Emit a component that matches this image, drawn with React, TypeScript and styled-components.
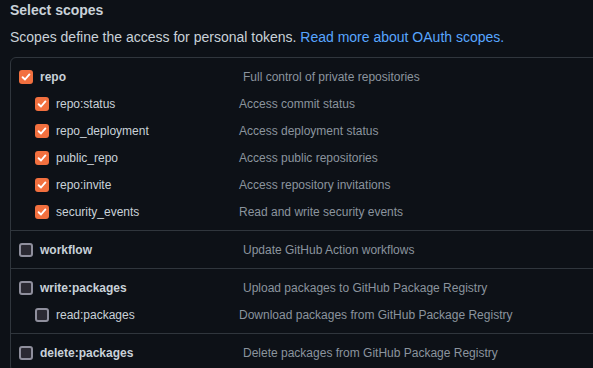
import React from "react";
import styled, { createGlobalStyle } from "styled-components";

interface Scope {
    name: string;
    description: string;
    checked: boolean;
    children?: Scope[];
}

const scopeGroups: Scope[] = [
    {
        name: "repo",
        description: "Full control of private repositories",
        checked: true,
        children: [
            { name: "repo:status", description: "Access commit status", checked: true },
            { name: "repo_deployment", description: "Access deployment status", checked: true },
            { name: "public_repo", description: "Access public repositories", checked: true },
            { name: "repo:invite", description: "Access repository invitations", checked: true },
            { name: "security_events", description: "Read and write security events", checked: true },
        ],
    },
    { name: "workflow", description: "Update GitHub Action workflows", checked: false },
    {
        name: "write:packages",
        description: "Upload packages to GitHub Package Registry",
        checked: false,
        children: [
            { name: "read:packages", description: "Download packages from GitHub Package Registry", checked: false },
        ],
    },
    { name: "delete:packages", description: "Delete packages from GitHub Package Registry", checked: false },
];

const GlobalStyle = createGlobalStyle`
    html, body {
        margin: 0;
        padding: 0;
        background: #0d1117;
        overflow: hidden;
    }
    body {
        font-family: "Liberation Sans", Arial, sans-serif;
        color: #c9d1d9;
    }
`

const Checkbox: React.FC<{ checked: boolean }> = ({ checked }) => (
    <SBox $checked={checked}>
        {checked && (
            <svg width="10" height="10" viewBox="0 0 10 10">
                <path
                    d="M1.6 5.2 L4 7.5 L8.4 2.4"
                    fill="none"
                    stroke="#ffffff"
                    strokeWidth="1.9"
                    strokeLinecap="round"
                    strokeLinejoin="round"
                />
            </svg>
        )}
    </SBox>
);

const ScopeRow: React.FC<{ scope: Scope; sub?: boolean }> = ({ scope, sub = false }) => (
    <SRow $sub={sub}>
        <Checkbox checked={scope.checked} />
        <SLabel $sub={sub}>{scope.name}</SLabel>
        <SDescription>{scope.description}</SDescription>
    </SRow>
);

export default function App() {
    return (
        <>
            <GlobalStyle />
            <SPage>
                <STitle>Select scopes</STitle>
                <SLead>
                    Scopes define the access for personal tokens.{" "}
                    <a href="#">Read more about OAuth scopes.</a>
                </SLead>
                <SScopeBox>
                    {scopeGroups.map(group => (
                        <SGroup key={group.name}>
                            <ScopeRow scope={group} />
                            {group.children?.map(child => (
                                <ScopeRow key={child.name} scope={child} sub />
                            ))}
                        </SGroup>
                    ))}
                </SScopeBox>
            </SPage>
        </>
    );
}

const SPage = styled.div`
    padding: 0 10px;
    width: 660px;
`

const STitle = styled.h3`
    margin: 0;
    font-size: 14px;
    line-height: 20px;
    font-weight: bold;
    color: #c9d1d9;
`

const SLead = styled.p`
    margin: 7px 0 10px;
    font-size: 14px;
    line-height: 20px;
    color: #c9d1d9;

    a {
        color: #58a6ff;
        text-decoration: none;
    }
`

const SScopeBox = styled.div`
    border: 1px solid #30363d;
    border-radius: 6px;
`

const SGroup = styled.div`
    padding: 5px 0;

    & + & {
        border-top: 1px solid #30363d;
    }
`

const SRow = styled.div<{ $sub: boolean }>`
    display: flex;
    align-items: center;
    height: 27px;
    padding-left: ${p => (p.$sub ? "24px" : "8px")};
    font-size: 12px;
`

const SBox = styled.span<{ $checked: boolean }>`
    flex: none;
    box-sizing: border-box;
    width: 14px;
    height: 14px;
    margin-right: 7px;
    border-radius: 3px;
    display: flex;
    align-items: center;
    justify-content: center;
    background: ${p => (p.$checked ? "#f2703f" : "#2b2a33")};
    border: ${p => (p.$checked ? "none" : "2px solid #8f8f9d")};
`

const SLabel = styled.span<{ $sub: boolean }>`
    flex: none;
    width: ${p => (p.$sub ? "183px" : "203px")};
    font-weight: ${p => (p.$sub ? "normal" : "bold")};
    color: #c9d1d9;
`

const SDescription = styled.span`
    color: #8b949e;
`
